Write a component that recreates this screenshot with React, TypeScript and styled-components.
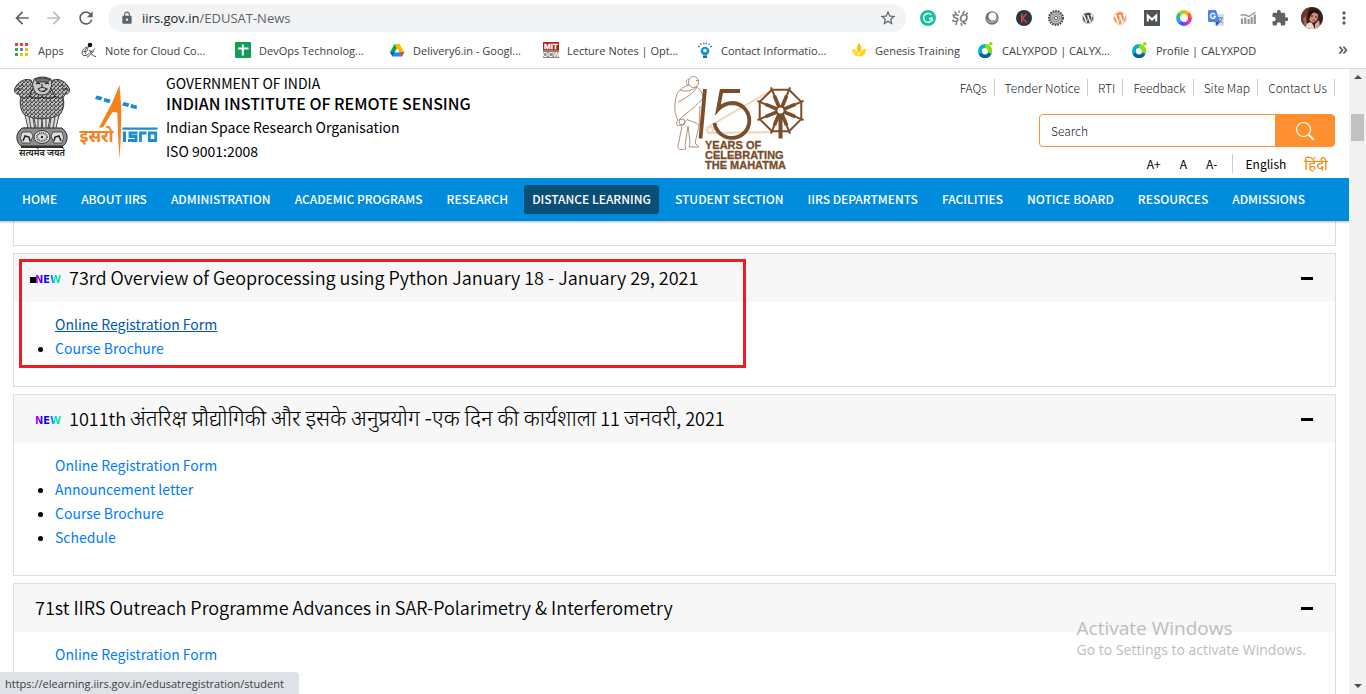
import React from "react";
import styled, { createGlobalStyle, css } from "styled-components";
import { FaWordpress } from "react-icons/fa";
import {
  MdArrowBack,
  MdArrowForward,
  MdExtension,
  MdLock,
  MdMoreVert,
  MdRefresh,
  MdStarBorder,
} from "react-icons/md";

const site = `"Noto Sans CJK SC", "Noto Sans Devanagari", sans-serif`;
const ui = `"Open Sans", "Noto Sans", sans-serif`;

const Global = createGlobalStyle`
  *, *::before, *::after { box-sizing: border-box; }
  body { margin: 0; background: #fff; overflow: hidden; }
  button, input { font: inherit; margin: 0; }
  a { text-decoration: none; color: inherit; }
  ul { margin: 0; }
`;

const Window = styled.div`
  position: relative;
  display: flex;
  flex-direction: column;
  height: 100vh;
  overflow: hidden;
  font-family: ${site};
  color: #000;
`;

/* ---------- browser chrome ---------- */

const Chrome = styled.header`
  flex: none;
  border-bottom: 1px solid #dadce0;
  font-family: ${ui};
  font-size: 11px;
  color: #3c4043;
`;

const Toolbar = styled.div`
  display: flex;
  align-items: center;
  height: 36px;
  padding: 0 6px;
`;

const IconButton = styled.button<{ $dim?: boolean }>`
  display: flex;
  flex: none;
  align-items: center;
  justify-content: center;
  width: 32px;
  height: 28px;
  padding: 0;
  border: 0;
  background: none;
  color: ${(p) => (p.$dim ? "#babcbe" : "#5f6368")};
`;

const AddressBar = styled.div`
  display: flex;
  flex: 1;
  align-items: center;
  gap: 8px;
  height: 28px;
  margin: 0 6px;
  padding: 0 2px 0 12px;
  border-radius: 14px;
  background: #f1f3f4;
  font-size: 13px;
  color: #5f6368;
`;

const Url = styled.span`
  flex: 1;
  b {
    font-weight: 400;
    color: #202124;
  }
`;

const Bookmarks = styled.nav`
  display: flex;
  align-items: center;
  gap: 16px;
  height: 32px;
  padding: 0 18px 4px 14px;
`;

const Bookmark = styled.a<{ $label: number }>`
  display: flex;
  flex: none;
  align-items: center;
  gap: 8px;
  span {
    width: ${(p) => p.$label}px;
    white-space: nowrap;
  }
`;

const More = styled.button`
  margin-left: auto;
  padding: 0 0 4px;
  border: 0;
  background: none;
  font-size: 18px;
  font-weight: 600;
  line-height: 20px;
  color: #5f6368;
`;

/* ---------- page frame ---------- */

const Viewport = styled.div`
  display: flex;
  flex: 1;
  min-height: 0;
`;

const Page = styled.div`
  flex: 1;
  min-width: 0;
  overflow: hidden;
`;

const Scrollbar = styled.div`
  display: flex;
  flex: none;
  flex-direction: column;
  align-items: center;
  justify-content: space-between;
  width: 17px;
  padding: 6px 0;
  background: #f1f1f1;
`;

const Arrow = styled.i<{ $down?: boolean }>`
  border: 4px solid transparent;
  ${(p) =>
    p.$down
      ? css`
          border-top-color: #505050;
          border-bottom: 0;
        `
      : css`
          border-bottom-color: #505050;
          border-top: 0;
        `}
`;

const Thumb = styled.i`
  width: 13px;
  height: 27px;
  margin: 35px 0 auto;
  background: #c1c1c1;
`;

/* ---------- site header ---------- */

const Masthead = styled.div`
  display: flex;
  align-items: flex-start;
  height: 109px;
  padding: 7px 14px 0;
`;

const Brand = styled.div`
  display: flex;
  flex: 1;
  gap: 8px;
`;

const BrandText = styled.div`
  display: flex;
  flex-direction: column;
  font-size: 14px;
  line-height: 24px;
  white-space: nowrap;
`;

const Government = styled.span`
  line-height: 15px;
`;

const Institute = styled.strong`
  font-size: 16px;
  font-weight: 500;
`;

const Tools = styled.div`
  display: flex;
  flex: none;
  flex-direction: column;
  align-items: flex-end;
  margin-left: 149px;
  width: 380px;
`;

const QuickLinks = styled.div`
  display: flex;
  margin: 3px 0 18px;
  font-size: 12px;
  font-weight: 300;
  line-height: 17px;
  color: #222;
  white-space: nowrap;
  a {
    padding: 0 7px 0 10px;
    border-right: 1px solid #ccc;
  }
`;

const SearchForm = styled.form`
  display: flex;
  width: 296px;
  height: 33px;
  border: 1px solid #ff8f2f;
  border-radius: 4px;
  background: #ff8f2f;
  overflow: hidden;
`;

const SearchInput = styled.input`
  flex: 1;
  min-width: 0;
  padding: 0 11px;
  border: 0;
  background: #fff;
  font-size: 12px;
  font-weight: 300;
  &::placeholder {
    color: #222;
    opacity: 1;
  }
`;

const SearchButton = styled.button`
  display: flex;
  align-items: center;
  justify-content: center;
  width: 59px;
  padding: 0;
  border: 0;
  background: none;
`;

const Options = styled.div`
  display: flex;
  align-items: center;
  height: 19px;
  margin: 7px 7px 0 0;
  font-size: 12px;
  line-height: 19px;
`;

const SizeButton = styled.button`
  margin-left: 19px;
  padding: 0;
  border: 0;
  background: none;
  font-size: 12px;
  line-height: 19px;
  color: #000;
`;

const Language = styled.a<{ $hindi?: boolean }>`
  ${(p) =>
    p.$hindi
      ? css`
          margin-left: 18px;
          font-size: 15px;
          color: #ff8100;
        `
      : css`
          margin-left: 14px;
          padding-left: 13px;
          border-left: 1px solid #ccc;
        `}
`;

const MainNav = styled.nav`
  position: relative;
  display: flex;
  align-items: flex-start;
  justify-content: space-between;
  height: 43px;
  padding: 7px 36px 0 14px;
  background: #008cdc;
  box-shadow: 0 1px 2px rgba(0, 0, 0, 0.3);
  font-size: 12px;
  font-weight: 500;
  line-height: 28px;
  color: #fff;
  white-space: nowrap;
`;

const NavItem = styled.a<{ $active?: boolean }>`
  padding: 0 8px 1px;
  border-radius: 3px;
  background: ${(p) => (p.$active ? "#0a4f76" : "transparent")};
`;

/* ---------- news panels ---------- */

const News = styled.main`
  display: flex;
  flex-direction: column;
  gap: 7px;
  padding: 0 13px;
`;

const Panel = styled.section`
  position: relative;
  min-height: 134px;
  border: 1px solid #ddd;
`;

const PanelTail = styled.div`
  height: 25px;
  border: 1px solid #ddd;
  border-top: 0;
`;

const PanelHead = styled.div`
  display: flex;
  align-items: center;
  height: 48px;
  padding: 0 22px 0 21px;
  background: #f7f7f7;
`;

const PanelTitle = styled.h2`
  flex: 1;
  margin: 0;
  padding-bottom: 2px;
  font-size: 18px;
  font-weight: 350;
  line-height: 28px;
  white-space: nowrap;
`;

const Devanagari = styled.span`
  font-size: 22px;
  line-height: 24px;
`;

const NewTag = styled.span<{ $marked?: boolean }>`
  position: relative;
  width: 34px;
  padding-top: 4px;
  font-family: "DejaVu Sans", sans-serif;
  font-size: 10px;
  font-weight: 700;
  line-height: 12px;
  b {
    color: transparent;
    background: linear-gradient(90deg, #e0f 0, #20f 7px, #00f 14px, #0cf 19px, #0f6 26px);
    background-clip: text;
  }
  ${(p) =>
    p.$marked &&
    css`
      &::before {
        content: "";
        position: absolute;
        top: 7px;
        left: -5px;
        width: 6px;
        height: 6px;
        background: #000;
      }
    `}
`;

const Collapse = styled.button`
  width: 12px;
  height: 24px;
  padding: 0;
  border: 0;
  background: linear-gradient(#000, #000) center / 12px 3px no-repeat;
`;

const LinkList = styled.ul`
  padding: 10px 0 26px 41px;
  font-size: 14px;
  line-height: 24px;
`;

const LinkItem = styled.li<{ $plain?: boolean }>`
  height: 24px;
  list-style: ${(p) => (p.$plain ? "none" : "disc")};
`;

const DocLink = styled.a<{ $hover?: boolean }>`
  color: ${(p) => (p.$hover ? "#0056b3" : "#007bff")};
  text-decoration: ${(p) => (p.$hover ? "underline" : "none")};
`;

/* ---------- overlays ---------- */

const Highlight = styled.div`
  position: absolute;
  top: 5px;
  left: 5px;
  width: 727px;
  height: 109px;
  border: 3px solid #ed1c24;
  pointer-events: none;
`;

const StatusBubble = styled.div`
  position: absolute;
  bottom: 0;
  left: 0;
  min-width: 299px;
  height: 22px;
  padding: 0 7px 0 5px;
  border-radius: 0 4px 0 0;
  background: #dee1e6;
  font-family: ${ui};
  font-size: 11px;
  line-height: 23px;
  color: #3c4043;
`;

const Watermark = styled.div`
  position: absolute;
  right: 60px;
  bottom: 34px;
  font-family: ${ui};
  font-size: 14px;
  line-height: 20px;
  color: #bdbdbd;
  strong {
    display: block;
    font-size: 19px;
    font-weight: 400;
    line-height: 24px;
  }
`;

/* ---------- drawings ---------- */

const Svg = ({ size = 16, children }: { size?: number; children: React.ReactNode }) => (
  <svg width={size} height={size} viewBox="0 0 16 16" aria-hidden="true">
    {children}
  </svg>
);

const AppsIcon = () => (
  <Svg>
    {["#ea4335", "#ea4335", "#ea4335", "#34a853", "#4285f4", "#fbbc04", "#34a853", "#fbbc04", "#fbbc04"].map(
      (c, i) => (
        <rect key={i} x={1 + (i % 3) * 5} y={1 + Math.floor(i / 3) * 5} width="3" height="3" fill={c} />
      ),
    )}
  </Svg>
);

const ScribbleIcon = () => (
  <Svg>
    <circle cx="9" cy="3" r="2.3" fill="#111" />
    <path
      d="M8 5C3 5 0 9 1.500 12.500C3 15 7 13 9 10.500M2.500 9.500C5 10 8 8 6.500 6.500C4.500 6 3 10 5 12M8 8.500L11 9.500L14 6.500M9.500 9.500C10 12 12 14.500 15 14.500M13 9C10 11 8 15 6 15"
      fill="none"
      stroke="#333"
      strokeWidth="0.9"
    />
  </Svg>
);

const SheetIcon = () => (
  <Svg>
    <rect width="16" height="16" rx="1" fill="#0f9d58" />
    <path d="M7.800 2.500V13.500M3 6.500H13.500" stroke="#fff" strokeWidth="2" />
  </Svg>
);

const DriveIcon = () => (
  <Svg>
    <path d="M5.500 2H10.500L8 6.400Z" fill="#0f9d58" />
    <path d="M5.500 2L8 6.400L3.500 14.500L1 10.200Z" fill="#00ac47" />
    <path d="M10.500 2L15.300 10.200H10.300L5.500 2Z" fill="#ffba00" />
    <path d="M5.700 10.200H15.300L12.800 14.500H3.400Z" fill="#2684fc" />
    <path d="M10.300 10.200H15.300L12.800 14.500Z" fill="#ea4335" />
    <path d="M1 10.200H5.900L3.400 14.500Z" fill="#0066da" />
    <path d="M8 6.400L10.200 10.200H5.800Z" fill="#fff" />
  </Svg>
);

const MitIcon = () => (
  <Svg>
    <rect width="16" height="8" fill="#b31b1b" />
    <rect y="8" width="16" height="8" fill="#8c8279" />
    <text x="8" y="7" fontSize="8" fontWeight="700" fontFamily="Liberation Sans" fill="#fff" stroke="#fff" strokeWidth="0.300" textAnchor="middle">
      MIT
    </text>
    <text x="8" y="15" fontSize="7" fontWeight="700" fontFamily="Liberation Sans" fill="#fff" textAnchor="middle">
      OCW
    </text>
  </Svg>
);

const BulbIcon = () => (
  <Svg>
    <circle cx="8" cy="9" r="4.300" fill="#0b95d4" />
    <circle cx="8" cy="8.500" r="1.800" fill="#fff" />
    <path d="M6 13H10" stroke="#0b95d4" strokeWidth="1.400" />
    <path d="M6 15H10" stroke="#1b3348" strokeWidth="1.600" />
    <path d="M1 4L3 5M3.500 1.500L4.500 3M6.700 0.500L7 2.300M9.300 0.500L9 2.300M12.500 1.500L11.500 3M15 4L13 5" stroke="#345" />
  </Svg>
);

const LotusIcon = () => (
  <Svg>
    <path d="M8 1C11 4 11 8 8 11C5 8 5 4 8 1Z" fill="#fbc500" />
    <path d="M1 7C5 7 7.500 9.500 8 14.500C3.500 14.500 1 11.500 1 7Z" fill="#ffd83a" />
    <path d="M15 7C11 7 8.500 9.500 8 14.500C12.500 14.500 15 11.500 15 7Z" fill="#ffd21c" />
  </Svg>
);

const CalyxIcon = () => (
  <Svg>
    <circle cx="7" cy="9" r="5" fill="none" stroke="#00b3cf" strokeWidth="4" />
    <path d="M7 2A7 7 0 0 1 14 9L12.500 12L9.500 9A3 3 0 0 0 7 6Z" fill="#8be000" />
    <path d="M0.600 12Q7 8.500 13.400 12A7 7 0 0 1 0.600 12" fill="#0361a8" />
    <circle cx="7" cy="9.500" r="3" fill="#fff" />
    <circle cx="12.800" cy="1.800" r="1.800" fill="#8be000" />
  </Svg>
);

const GrammarlyIcon = () => (
  <Svg>
    <circle cx="8" cy="8" r="8" fill="#15c39a" />
    <path d="M11.300 4.900A4.400 4.400 0 1 0 12.300 8.800H9M10.800 7.300L12.400 8.800V11" fill="none" stroke="#fff" strokeWidth="1.400" />
  </Svg>
);

const SqIcon = () => (
  <Svg>
    <path d="M7 0.500V3M9 13L10 16M2.500 1.500L4.500 4M12.500 1L10.500 4M3.500 15L5 12M13.500 14.500L12 12M0.500 5H2M14 4L16 3" stroke="#777" strokeWidth="1.400" />
    <text x="7.800" y="12" fontSize="11" fontWeight="700" fontStyle="italic" fontFamily="Liberation Sans" fill="#777" textAnchor="middle">
      SQ
    </text>
  </Svg>
);

const BallIcon = () => (
  <Svg>
    <circle cx="8" cy="8" r="6.700" fill="#6f6f6f" />
    <circle cx="8.500" cy="6.500" r="4" fill="#fff" />
    <path d="M2.500 10Q8 15 14 8.500" fill="none" stroke="#aaa" strokeWidth="1.600" />
  </Svg>
);

const KIcon = () => (
  <Svg>
    <circle cx="8" cy="8" r="8" fill="#2b3644" />
    <path d="M5.800 3.500V12.500M10.600 3.500L6.400 8.200L10.800 12.500" fill="none" stroke="#d5433c" strokeWidth="1.600" />
  </Svg>
);

const GearIcon = () => (
  <Svg>
    <circle cx="8" cy="8" r="7" fill="none" stroke="#444" strokeWidth="2" strokeDasharray="1.650 1.015" />
    <circle cx="8" cy="8" r="6" fill="#c4c4c4" stroke="#555" strokeWidth="0.800" />
    <circle cx="8" cy="8" r="3.800" fill="none" stroke="#888" strokeWidth="1.600" strokeDasharray="1.500 0.880" />
    <circle cx="8" cy="8" r="1.700" fill="#eee" stroke="#444" strokeWidth="0.800" />
  </Svg>
);

const MIcon = () => (
  <Svg>
    <rect width="16" height="16" fill="#4d5558" />
    <path d="M3.800 11.500V5.500L8 9.500L12.200 5.500V11.500" fill="none" stroke="#fff" strokeWidth="2" />
  </Svg>
);

const RingIcon = () => (
  <Svg>
    <g fill="none" strokeWidth="3.800">
      {["#ffb400", "#ff5a36", "#f0318c", "#9a3df0", "#4b52f5", "#2aa0f5", "#27c281", "#a5cf2b"].map((c, i) => (
        <circle
          key={c}
          cx="8"
          cy="8"
          r="6"
          stroke={c}
          strokeDasharray="4.800 32.900"
          transform={`rotate(${i * 45 - 90} 8 8)`}
        />
      ))}
    </g>
  </Svg>
);

const TranslateIcon = () => (
  <Svg>
    <rect x="6" y="4" width="10" height="12" rx="1" fill="#dadce0" />
    <path d="M9.500 8H15M12.200 7V8M14 8C13.500 10.500 12 12 10.500 13M10.800 9.500L14.500 13" stroke="#5f7f95" fill="none" />
    <path d="M1 0H8L12 12H1Q0 12 0 11V1Q0 0 1 0Z" fill="#4a86e8" />
    <path d="M12 12L8.500 16L7.500 12Z" fill="#2a56c6" />
    <path d="M7.200 4.600A2.500 2.500 0 1 0 7.500 6.300H5.200" fill="none" stroke="#fff" strokeWidth="1.200" />
  </Svg>
);

const ChartIcon = () => (
  <Svg>
    <path d="M0.500 5H5.500L9 6.500L15.500 2" fill="none" stroke="#999" strokeWidth="1.500" />
    <path d="M2 8.500V14M5.300 7.500V14M8.600 9V14M11.700 7V14M14.800 4.500V14" stroke="#999" strokeWidth="2.200" />
  </Svg>
);

const Avatar = () => (
  <svg width="22" height="22" viewBox="0 0 22 22" aria-hidden="true">
    <clipPath id="face">
      <circle cx="11" cy="11" r="11" />
    </clipPath>
    <g clipPath="url(#face)">
      <rect width="22" height="22" fill="#3a1d18" />
      <path d="M0 8C2 2 5 1 8 1L5 13L0 16Z" fill="#6b3a2c" />
      <path d="M2 12L5 9L6 17L3 19Z" fill="#9a6a58" />
      <ellipse cx="12.500" cy="9.500" rx="4.500" ry="6" fill="#c98f79" transform="rotate(15 12.500 9.500)" />
      <path d="M7 10C8 1 15 0 18 6L16 7C13 4 10 6 8.500 12Z" fill="#24110f" />
      <path d="M10 9H12M14 10H16" stroke="#3a1d18" />
      <path d="M11.500 13.200H14" stroke="#a33c3c" />
      <path d="M4 22C4 17 8 14.500 11 16L14 22Z" fill="#ecd6cb" />
      <path d="M14 17L18 13L19 20L14 22Z" fill="#d9a590" />
    </g>
  </svg>
);

const Emblem = () => (
  <svg width="56" height="84" viewBox="0 0 56 84" role="img" aria-label="State Emblem of India">
    <defs>
      <pattern id="mane" width="4" height="4" patternUnits="userSpaceOnUse">
        <rect width="4" height="4" fill="#bdbdbd" />
        <path d="M0 0L2 3L4 0M0 4L2 2" fill="none" stroke="#333" strokeWidth="0.900" />
      </pattern>
    </defs>
    <g stroke="#333" strokeWidth="1">
      <path
        d="M8 17C6 24 5 30 9 37C14 44 20 42 28 43S42 44 47 37C51 30 50 24 48 17L38 9H18Z"
        fill="url(#mane)"
      />
      <path d="M17 4C10 2 4 6 1 12C-1 15 2 19 5 18C6 23 12 24 16 19L20 10Z" fill="url(#mane)" />
      <path d="M39 4C46 2 52 6 55 12C57 15 54 19 51 18C50 23 44 24 40 19L36 10Z" fill="url(#mane)" />
      <path d="M20 3Q28 -1 37 3Q39 9 36 14Q34 19 28 19Q22 19 20 14Q17 9 20 3Z" fill="#c9c9c9" />
      <path d="M21 4Q28 0 36 4L34 6H23Z" fill="#777" />
    </g>
    <g fill="none" stroke="#222">
      <path
        d="M22 8Q24 6 26 8M31 8Q33 6 35 8M28 8V12M24 13Q28 10 33 13Q28 18 24 13M2 13H7M49 13H54M7 9H9M47 9H49M15 20Q22 24 28 21Q36 24 42 20"
        strokeWidth="1.200"
      />
    </g>
    <g fill="#ddd" stroke="#333" strokeWidth="0.900">
      <path d="M11 39L14 52H10V55H21L19 42Z" />
      <path d="M20 42L22 52L19 55H27L28 43Z" />
      <path d="M28 43L29 55H37L34 52L36 42Z" />
      <path d="M45 39L42 52L46 55H35L37 42Z" />
    </g>
    <path d="M15 40L17 53M24 43V54M32 43V54M41 40L39 53" stroke="#555" strokeWidth="1.200" />
    <path d="M8 52H48Q54 57 53 63Q52 69 48 70H8Q4 69 3 63Q2 57 8 52Z" fill="#8e8e8e" stroke="#2b2b2b" />
    <path
      d="M8 56H17L19 60L16 67H8Q5 62 8 56ZM48 56H39L37 60L40 67H48Q51 62 48 56Z"
      fill="#e0e0e0"
      stroke="#333"
      strokeWidth="0.800"
    />
    <path d="M9 65L11 60L15 61L16 65M47 65L45 60L41 61L40 65" fill="none" stroke="#222" strokeWidth="1.500" />
    <ellipse cx="28" cy="61" rx="8" ry="6.500" fill="#ddd" stroke="#333" />
    <ellipse cx="28" cy="61" rx="5" ry="4" fill="none" stroke="#555" strokeWidth="2" strokeDasharray="1 0.800" />
    <circle cx="28" cy="61" r="1.200" fill="#222" />
    <path d="M7 71H49" stroke="#333" strokeWidth="2" />
    <text x="28" y="80" fontSize="9" fontWeight="600" textAnchor="middle" fontFamily="'Noto Sans Devanagari', sans-serif" fill="#222">
      सत्यमेव जयते
    </text>
  </svg>
);

const IsroLogo = () => (
  <svg width="80" height="84" viewBox="0 0 80 84" role="img" aria-label="ISRO">
    <path d="M41.500 9L43.200 30L42.800 62L41.500 83L40.200 62L39.300 36.500L34.500 36L25 51.500L21 51.500L34 27Z" fill="#f58220" />
    <g fill="#1b8ed0">
      <path d="M18.500 19.500L24.500 21L23 24.500L17 23ZM26.500 22L32.500 23.500L31.500 27.200L25.500 25.500ZM45.500 26L51.500 27.500L50 31L44 29.500ZM53 28L59 29.500L58.500 33.200L52.500 31.700Z" />
      <path d="M44.500 51.500H79.500V53.800H44.500Z" />
      <path d="M44.800 55.500H48V66H44.800Z" />
    </g>
    <path
      d="M59.500 57H52V60.500H58V64.500H50M62.500 66V57H68.500M71.300 57H77.700V64.500H71.300Z"
      fill="none"
      stroke="#1b8ed0"
      strokeWidth="2.800"
    />
    <text x="18.500" y="66" fontSize="17" fontWeight="700" textAnchor="middle" fontFamily="'Noto Sans Devanagari', sans-serif" fill="#f58220">
      इसरो
    </text>
  </svg>
);

const vertices = (radius: number) =>
  Array.from({ length: 8 }, (_, i) => {
    const a = ((i * 45 + 22.5) * Math.PI) / 180;
    return [106.5 + radius * Math.cos(a), 34.5 + radius * Math.sin(a)];
  });

const MahatmaLogo = () => (
  <svg width="132" height="96" viewBox="0 0 132 96" role="img" aria-label="150 Years of Celebrating the Mahatma">
    <g fill="none" stroke="#a5846c" strokeWidth="0.900">
      <ellipse cx="19.500" cy="6" rx="5" ry="5.500" />
      <path d="M15 3C11 4 12 9 15 9.500M22 4.500H25M15 9C8 11 2 16 1.500 24C0 32 1 39 4 44C1 48 3 51 8 49L14 43M22 10C27 14 29 18 29 22L25 27M6 14C12 16 18 15 22 11M4 26C12 22 20 17 23 11M5 44C10 38 20 33 24 27M14 44C19 46 24 47 25 50M8 50L4 70C3 74 8 74 12 73L11 69L14 50M14 50L16 66L15 71L25 71L21 67L25 50M25 50L26 30" />
      <circle cx="8" cy="46" r="3" />
    </g>
    <g fill="none" stroke="#f0d5bd" strokeWidth="2">
      <circle cx="36" cy="54" r="3" />
      <path d="M34 51L98 14M37 57L98 56" />
    </g>
    <g fill="none" stroke="#7a4d2b">
      <path d="M31 13L26.500 62.500" strokeWidth="3.800" />
      <path d="M66 15H47.500L44 33.500Q50 27 59 27A17.500 17.500 0 1 1 40.500 47" strokeWidth="3.800" />
      <polygon points={vertices(22.5).map((p) => p.join(",")).join(" ")} strokeWidth="2" />
      {vertices(25).map(([x, y]) => (
        <path key={`${x}-${y}`} d={`M106.500 34.500L${x} ${y}`} strokeWidth="2" />
      ))}
      {vertices(16).map(([x, y]) => (
        <path key={`${x}-${y}`} d={`M106.500 34.500L${x} ${y}`} strokeWidth="3.600" />
      ))}
      <path d="M106.500 37V62.500" strokeWidth="4" />
      <circle cx="106.500" cy="34.500" r="4" fill="#fff" strokeWidth="2" />
    </g>
    <g
      fill="#7a4d2b"
      stroke="#7a4d2b"
      strokeWidth="0.300"
      fontFamily="'Liberation Sans', sans-serif"
      fontWeight="700"
      fontSize="11"
    >
      <text x="31" y="73">YEARS OF</text>
      <text x="31" y="83">CELEBRATING</text>
      <text x="31" y="93">THE MAHATMA</text>
    </g>
  </svg>
);

const SearchGlyph = () => (
  <svg width="20" height="20" viewBox="0 0 20 20" fill="none" stroke="#fff" strokeWidth="1.200" aria-hidden="true">
    <circle cx="8.500" cy="8.500" r="7" />
    <path d="M13.500 13.500L19 19" strokeWidth="1.800" />
  </svg>
);

/* ---------- data ---------- */

const extensions: [string, React.ReactNode][] = [
  ["Grammarly", <GrammarlyIcon />],
  ["SQ", <SqIcon />],
  ["Ball", <BallIcon />],
  ["Keywords", <KIcon />],
  ["Gear", <GearIcon />],
  ["WordPress", <FaWordpress size={12} color="#444" />],
  ["WordPress theme", <FaWordpress size={14} color="#ee8746" />],
  ["M", <MIcon />],
  ["Colour ring", <RingIcon />],
  ["Translate", <TranslateIcon />],
  ["Chart", <ChartIcon />],
  ["Extensions", <MdExtension size={18} />],
  ["Profile", <Avatar />],
  ["Menu", <MdMoreVert size={20} />],
];

const bookmarks: [string, number, React.ReactNode][] = [
  ["Apps", 27, <AppsIcon />],
  ["Note for Cloud Co...", 114, <ScribbleIcon />],
  ["DevOps Technolog...", 114, <SheetIcon />],
  ["Delivery6.in - Googl...", 114, <DriveIcon />],
  ["Lecture Notes | Opt...", 114, <MitIcon />],
  ["Contact Informatio...", 114, <BulbIcon />],
  ["Genesis Training", 87, <LotusIcon />],
  ["CALYXPOD | CALYX...", 114, <CalyxIcon />],
  ["Profile | CALYXPOD", 114, <CalyxIcon />],
];

const quickLinks = ["FAQs", "Tender Notice", "RTI", "Feedback", "Site Map", "Contact Us"];

const navItems = [
  "HOME",
  "ABOUT IIRS",
  "ADMINISTRATION",
  "ACADEMIC PROGRAMS",
  "RESEARCH",
  "DISTANCE LEARNING",
  "STUDENT SECTION",
  "IIRS DEPARTMENTS",
  "FACILITIES",
  "NOTICE BOARD",
  "RESOURCES",
  "ADMISSIONS",
];

type Course = {
  id: string;
  title: React.ReactNode;
  isNew?: boolean;
  highlighted?: boolean;
  links: string[];
};

const courses: Course[] = [
  {
    id: "geoprocessing",
    title: "73rd Overview of Geoprocessing using Python January 18 - January 29, 2021",
    isNew: true,
    highlighted: true,
    links: ["Online Registration Form", "Course Brochure"],
  },
  {
    id: "workshop",
    title: (
      <>
        1011th <Devanagari lang="hi">अंतरिक्ष प्रौद्योगिकी और इसके अनुप्रयोग -एक दिन की कार्यशाला</Devanagari> 11{" "}
        <Devanagari lang="hi">जनवरी</Devanagari>, 2021
      </>
    ),
    isNew: true,
    links: ["Online Registration Form", "Announcement letter", "Course Brochure", "Schedule"],
  },
  {
    id: "polarimetry",
    title: "71st IIRS Outreach Programme Advances in SAR-Polarimetry & Interferometry",
    links: ["Online Registration Form"],
  },
];

export default function App() {
  return (
    <Window>
      <Global />
      <Chrome>
        <Toolbar>
          <IconButton aria-label="Back"><MdArrowBack size={20} /></IconButton>
          <IconButton aria-label="Forward" $dim><MdArrowForward size={20} /></IconButton>
          <IconButton aria-label="Reload"><MdRefresh size={20} /></IconButton>
          <AddressBar>
            <MdLock size={14} />
            <Url><b>iirs.gov.in</b>/EDUSAT-News</Url>
            <IconButton aria-label="Bookmark this page"><MdStarBorder size={18} /></IconButton>
          </AddressBar>
          {extensions.map(([name, icon]) => (
            <IconButton key={name} aria-label={name}>{icon}</IconButton>
          ))}
        </Toolbar>
        <Bookmarks>
          {bookmarks.map(([name, width, icon]) => (
            <Bookmark key={name} href="#" $label={width}>
              {icon}
              <span>{name}</span>
            </Bookmark>
          ))}
          <More aria-label="More bookmarks">»</More>
        </Bookmarks>
      </Chrome>

      <Viewport>
        <Page>
          <Masthead>
            <Brand>
              <Emblem />
              <IsroLogo />
              <BrandText>
                <Government>GOVERNMENT OF INDIA</Government>
                <Institute>INDIAN INSTITUTE OF REMOTE SENSING</Institute>
                <span>Indian Space Research Organisation</span>
                <span>ISO 9001:2008</span>
              </BrandText>
            </Brand>
            <MahatmaLogo />
            <Tools>
              <QuickLinks>
                {quickLinks.map((l) => (
                  <a key={l} href="#">{l}</a>
                ))}
              </QuickLinks>
              <SearchForm>
                <SearchInput aria-label="Search" placeholder="Search" />
                <SearchButton type="button" aria-label="Submit search"><SearchGlyph /></SearchButton>
              </SearchForm>
              <Options>
                <SizeButton>A+</SizeButton>
                <SizeButton>A</SizeButton>
                <SizeButton>A-</SizeButton>
                <Language href="#">English</Language>
                <Language href="#" $hindi>हिंदी</Language>
              </Options>
            </Tools>
          </Masthead>
          <MainNav>
            {navItems.map((n) => (
              <NavItem key={n} href="#" $active={n === "DISTANCE LEARNING"}>{n}</NavItem>
            ))}
          </MainNav>
          <News>
            <PanelTail />
            {courses.map((c) => (
              <Panel key={c.id}>
                <PanelHead>
                  {c.isNew && <NewTag $marked={c.highlighted}><b>NEW</b></NewTag>}
                  <PanelTitle>{c.title}</PanelTitle>
                  <Collapse aria-label="Collapse" />
                </PanelHead>
                <LinkList>
                  {c.links.map((l, i) => (
                    <LinkItem key={l} $plain={i === 0}>
                      <DocLink href="#" $hover={c.highlighted && i === 0}>{l}</DocLink>
                    </LinkItem>
                  ))}
                </LinkList>
                {c.highlighted && <Highlight />}
              </Panel>
            ))}
          </News>
        </Page>
        <Scrollbar>
          <Arrow />
          <Thumb />
          <Arrow $down />
        </Scrollbar>
      </Viewport>

      <StatusBubble>https://elearning.iirs.gov.in/edusatregistration/student</StatusBubble>
      <Watermark>
        <strong>Activate Windows</strong>
        Go to Settings to activate Windows.
      </Watermark>
    </Window>
  );
}
